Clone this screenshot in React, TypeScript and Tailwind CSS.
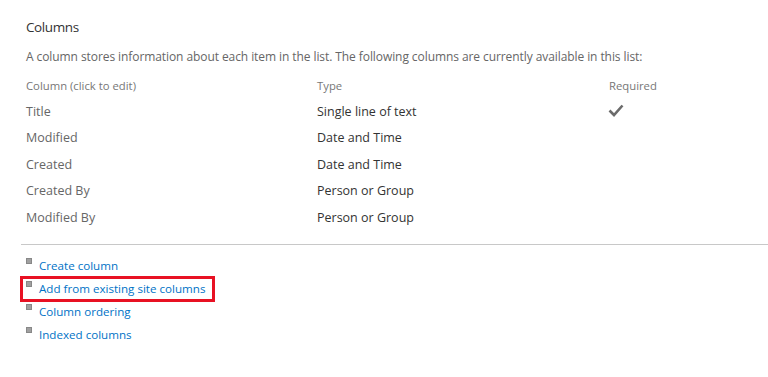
import React from "react";

const rows = [
  { name: "Title", type: "Single line of text", req: true },
  { name: "Modified", type: "Date and Time", req: false },
  { name: "Created", type: "Date and Time", req: false },
  { name: "Created By", type: "Person or Group", req: false },
  { name: "Modified By", type: "Person or Group", req: false },
];

const links = [
  { label: "Create column", boxed: false },
  { label: "Add from existing site columns", boxed: true },
  { label: "Column ordering", boxed: false },
  { label: "Indexed columns", boxed: false },
];

export default function App() {
  return (
    <div
      className="w-[768px] h-[377px] bg-white overflow-hidden"
      style={{ fontFamily: '"Open Sans", "Noto Sans", sans-serif' }}
    >
      <div className="pl-[26px] pt-[17px]">
        <div className="text-[13.5px] leading-[20px] text-[#333] tracking-[-0.4px]">Columns</div>
        <div className="mt-[11px] text-[12px] leading-[18px] text-[#666] tracking-[-0.08px]">
          A column stores information about each item in the list. The following columns are currently available in this list:
        </div>
        <div className="mt-[11px] grid grid-cols-[291px_292px_1fr] text-[11.3px] leading-[18px] text-[#777]">
          <div>Column (click to edit)</div>
          <div>Type</div>
          <div>Required</div>
        </div>
        <div className="mt-[4px]">
          {rows.map((r) => (
            <div
              key={r.name}
              className="grid grid-cols-[291px_292px_1fr] h-[26.5px] items-center text-[12.5px]"
            >
              <div className="text-[#666]">{r.name}</div>
              <div className="text-[#333]">{r.type}</div>
              <div className="flex items-center">
                {r.req && (
                  <svg width="16" height="13" viewBox="0 0 16 13" className="-ml-[1px] -mt-[4px]">
                    <path d="M1.5 6.5 L6 11 L14.5 1.5" stroke="#6b6b6b" strokeWidth="2.6" fill="none" />
                  </svg>
                )}
              </div>
            </div>
          ))}
        </div>
      </div>
      <div className="ml-[21px] mt-[12px] h-[1px] bg-[#c8c8c8]" />
      <div className="pl-[20px] pt-[10px] flex flex-col">
        {links.map((l) => (
          <div key={l.label} className="h-[23px] flex items-center">
            <div
              className={
                "flex items-center h-[26px] pl-[3px] pr-[7px] border-[3px] " +
                (l.boxed ? "border-[#e81123]" : "border-transparent")
              }
            >
              <span className="w-[6px] h-[6px] bg-[#a0a0a0] border border-[#888] self-start mt-[2px] mr-[7px]" />
              <span className="text-[11.6px] text-[#0072c6]">{l.label}</span>
            </div>
          </div>
        ))}
      </div>
    </div>
  );
}
